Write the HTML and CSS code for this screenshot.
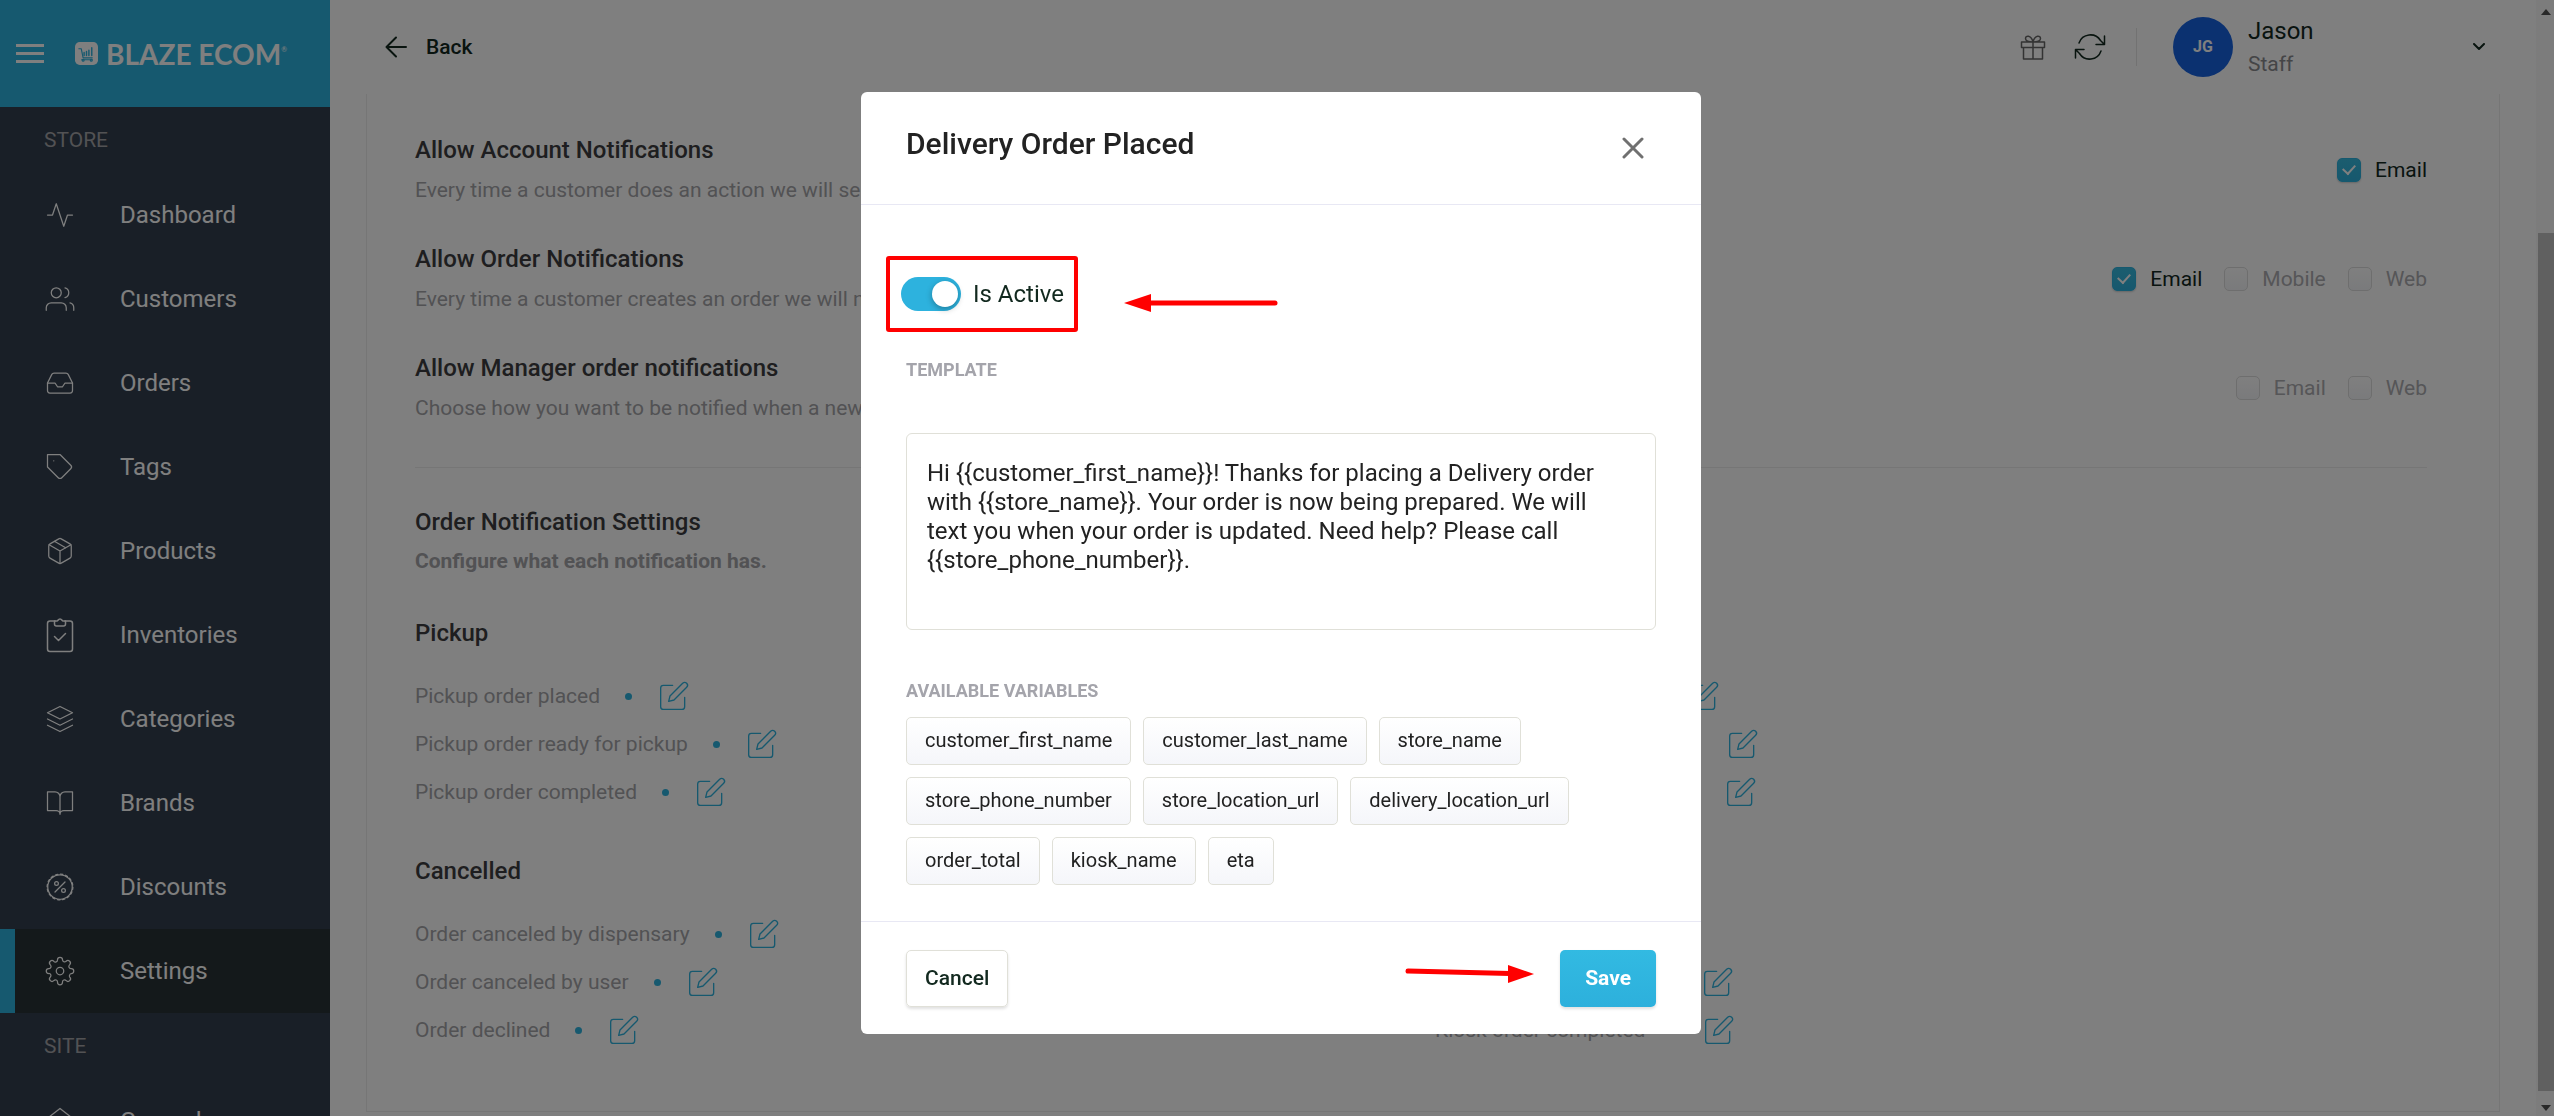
FILE: index.html
```
<!DOCTYPE html>
<html lang="en">
<head>
  <meta charset="UTF-8" />
  <meta name="viewport" content="width=device-width, initial-scale=1" />
  <title>Blaze Ecom - Notifications</title>
  <link rel="stylesheet" href="styles.css">
</head>
<body>
  <svg class="sprite" aria-hidden="true">
    <symbol id="i-edit" viewBox="0 0 24 24">
      <path d="M11 4H4a2 2 0 0 0-2 2v14a2 2 0 0 0 2 2h14a2 2 0 0 0 2-2v-7" />
      <path d="M18.5 2.5a2.12 2.12 0 0 1 3 3L12 15l-4 1 1-4z" />
    </symbol>
  </svg>

  <div class="app">
    <aside class="sidebar">
      <div class="sidebar-header">
        <button class="menu-btn" type="button" aria-label="Toggle menu"><span></span><span></span><span></span></button>
        <div class="logo">
          <svg class="logo-icon" viewBox="0 0 24 24">
            <rect width="24" height="24" rx="5" fill="#fff" />
            <g fill="none" stroke="#2db2de" stroke-width="1.2">
              <path d="M4 7h2.500l2 9.500h9.500" />
              <path d="M9.500 14V11M12 14V10M14.500 14V8.500M17.500 14V6" stroke-width="1.500" />
              <path d="M7 18.500h11" />
              <circle cx="8.500" cy="19" r="1" />
              <circle cx="17" cy="19" r="1" />
            </g>
          </svg>
          <span class="logo-text">BLAZE ECOM<sup>®</sup></span>
        </div>
      </div>
      <nav class="sidebar-nav">
        <div class="nav-title">STORE</div>
        <a class="nav-item" href="#"><svg class="icon" viewBox="0 0 24 24"><path d="M22 12h-4l-3 9L9 3l-3 9H2" /></svg>Dashboard</a>
        <a class="nav-item" href="#"><svg class="icon" viewBox="0 0 24 24"><path d="M17 21v-2a4 4 0 0 0-4-4H5a4 4 0 0 0-4 4v2" /><circle cx="9" cy="7" r="4" /><path d="M23 21v-2a4 4 0 0 0-3-3.870M16 3.130a4 4 0 0 1 0 7.750" /></svg>Customers</a>
        <a class="nav-item" href="#"><svg class="icon" viewBox="0 0 24 24"><path d="M22 12h-6l-2 3h-4l-2-3H2" /><path d="M5.450 5.110L2 12v6a2 2 0 0 0 2 2h16a2 2 0 0 0 2-2v-6l-3.450-6.890A2 2 0 0 0 16.760 4H7.240a2 2 0 0 0-1.790 1.110z" /></svg>Orders</a>
        <a class="nav-item" href="#"><svg class="icon" viewBox="0 0 24 24"><path d="M20.590 13.410l-7.170 7.170a2 2 0 0 1-2.830 0L2 12V2h10l8.590 8.590a2 2 0 0 1 0 2.820z" /><path d="M7 7h.01" /></svg>Tags</a>
        <a class="nav-item" href="#"><svg class="icon" viewBox="0 0 24 24"><path d="M16.500 9.400l-9-5.190M21 16V8a2 2 0 0 0-1-1.730l-7-4a2 2 0 0 0-2 0l-7 4A2 2 0 0 0 3 8v8a2 2 0 0 0 1 1.730l7 4a2 2 0 0 0 2 0l7-4A2 2 0 0 0 21 16z" /><path d="M3.270 6.960L12 12.010l8.730-5.050M12 22.080V12" /></svg>Products</a>
        <a class="nav-item" href="#"><svg class="icon icon-tall" viewBox="0 0 30 36"><path d="M10 4H5a2.500 2.500 0 0 0-2.500 2.500V32A2.500 2.500 0 0 0 5 34.500h20a2.500 2.500 0 0 0 2.500-2.500V6.500A2.500 2.500 0 0 0 25 4h-5" /><path d="M9.500 4h2.500c1 0 1-2 3-2s2 2 3 2h2.500v3a2 2 0 0 1-2 2h-7a2 2 0 0 1-2-2zM9.500 19.500l4 4 7-7" /></svg>Inventories</a>
        <a class="nav-item" href="#"><svg class="icon" viewBox="0 0 24 24"><path d="M12 2L2 7l10 5 10-5-10-5zM2 17l10 5 10-5M2 12l10 5 10-5" /></svg>Categories</a>
        <a class="nav-item" href="#"><svg class="icon" viewBox="0 0 24 24"><path d="M2 3h6a4 4 0 0 1 4 4v14a3 3 0 0 0-3-3H2zM22 3h-6a4 4 0 0 0-4 4v14a3 3 0 0 1 3-3h7z" /></svg>Brands</a>
        <a class="nav-item" href="#"><svg class="icon" viewBox="0 0 24 24"><circle cx="12" cy="12" r="9.800" /><circle cx="12" cy="12" r="10.300" stroke-dasharray="2 2.045" /><circle cx="9.200" cy="9.200" r="1.500" /><circle cx="14.800" cy="14.800" r="1.500" /><path d="M16 8l-8 8" /></svg>Discounts</a>
        <a class="nav-item active" href="#"><svg class="icon" viewBox="0 0 24 24"><circle cx="12" cy="12" r="3" /><path d="M19.730 15.180a1.650 1.650 0 0 0 0 1.640l.06.06a2 2 0 0 1-2.830 2.830l-.06-.06a1.650 1.650 0 0 0-2.900 1.180V21a2 2 0 0 1-4 0v-.17a1.650 1.650 0 0 0-2.900-1.180l-.06.06a2 2 0 0 1-2.830-2.830l.06-.06A1.650 1.650 0 0 0 3.090 14H3a2 2 0 0 1 0-4h.09a1.650 1.650 0 0 0 1.180-2.900l-.06-.06a2 2 0 0 1 2.830-2.830l.06.06A1.650 1.650 0 0 0 10 3.090V3a2 2 0 0 1 4 0v.09a1.650 1.650 0 0 0 2.820 1.180l.06-.06a2 2 0 0 1 2.830 2.830l-.06.06A1.650 1.650 0 0 0 20.910 10H21a2 2 0 0 1 0 4h-.09a1.650 1.650 0 0 0-1.180 1.180z" /></svg>Settings</a>
        <div class="nav-title">SITE</div>
        <a class="nav-item" href="#"><svg class="icon" viewBox="0 0 24 24"><path d="M3 9l9-7 9 7v11a2 2 0 0 1-2 2H5a2 2 0 0 1-2-2z" /></svg>General</a>
      </nav>
    </aside>

    <main class="content">
      <header class="topbar">
        <button class="back-btn" type="button">
          <svg class="back-icon" viewBox="0 0 22 22"><path d="M21 11H1.500M11 1.500L1.500 11l9.500 9.500" /></svg>
          Back
        </button>
        <div class="topbar-right">
          <button class="icon-btn" type="button" aria-label="Rewards">
            <svg class="gift-icon" viewBox="0 0 26 26"><path d="M1.500 8h23v5.500h-23zM3.500 13.500h19V25h-19zM13 8v17M13 8C9 8 5.500 7.500 5.500 4.500S11 .5 13 8zM13 8c4 0 7.500-.5 7.500-3.500S15 .5 13 8z" /></svg>
          </button>
          <button class="icon-btn" type="button" aria-label="Refresh">
            <svg class="refresh-icon" viewBox="0 0 32 28"><path d="M30.500 3v8.500H22M1.500 25v-8.500H10M5 10a12 12 0 0 1 21.500-2.500l4 4M1.500 16.500l4 4A12 12 0 0 0 27 18" /></svg>
          </button>
          <div class="user">
            <div class="avatar">JG</div>
            <div class="user-info">
              <div class="user-name">Jason</div>
              <div class="user-role">Staff</div>
            </div>
            <svg class="chevron" viewBox="0 0 12 8"><path d="M1 1l5 5 5-5" /></svg>
          </div>
        </div>
      </header>

      <section class="card">
        <div class="option">
          <div>
            <h3>Allow Account Notifications</h3>
            <p>Every time a customer does an action we will send an email.</p>
          </div>
          <div class="checks">
            <label class="check"><input type="checkbox" checked />Email</label>
          </div>
        </div>
        <div class="option">
          <div>
            <h3>Allow Order Notifications</h3>
            <p>Every time a customer creates an order we will notify them.</p>
          </div>
          <div class="checks">
            <label class="check"><input type="checkbox" checked />Email</label>
            <label class="check"><input type="checkbox" disabled />Mobile</label>
            <label class="check"><input type="checkbox" disabled />Web</label>
          </div>
        </div>
        <div class="option">
          <div>
            <h3>Allow Manager order notifications</h3>
            <p>Choose how you want to be notified when a new order is placed.</p>
          </div>
          <div class="checks">
            <label class="check"><input type="checkbox" disabled />Email</label>
            <label class="check"><input type="checkbox" disabled />Web</label>
          </div>
        </div>

        <div class="order-settings">
          <h3>Order Notification Settings</h3>
          <p class="strong">Configure what each notification has.</p>
          <div class="groups">
            <div class="group">
              <h3>Pickup</h3>
              <ul>
                <li>Pickup order placed<i class="dot"></i><button class="edit-btn" type="button" aria-label="Edit"><svg><use href="#i-edit" /></svg></button></li>
                <li>Pickup order ready for pickup<i class="dot"></i><button class="edit-btn" type="button" aria-label="Edit"><svg><use href="#i-edit" /></svg></button></li>
                <li>Pickup order completed<i class="dot"></i><button class="edit-btn" type="button" aria-label="Edit"><svg><use href="#i-edit" /></svg></button></li>
              </ul>
            </div>
            <div class="group">
              <h3>Delivery</h3>
              <ul>
                <li>Delivery order placed<i class="dot"></i><button class="edit-btn" type="button" aria-label="Edit"><svg><use href="#i-edit" /></svg></button></li>
                <li>Delivery order on the way<i class="dot"></i><button class="edit-btn" type="button" aria-label="Edit"><svg><use href="#i-edit" /></svg></button></li>
                <li>Delivery order completed<i class="dot"></i><button class="edit-btn" type="button" aria-label="Edit"><svg><use href="#i-edit" /></svg></button></li>
              </ul>
            </div>
            <div class="group">
              <h3>Cancelled</h3>
              <ul>
                <li>Order canceled by dispensary<i class="dot"></i><button class="edit-btn" type="button" aria-label="Edit"><svg><use href="#i-edit" /></svg></button></li>
                <li>Order canceled by user<i class="dot"></i><button class="edit-btn" type="button" aria-label="Edit"><svg><use href="#i-edit" /></svg></button></li>
                <li>Order declined<i class="dot"></i><button class="edit-btn" type="button" aria-label="Edit"><svg><use href="#i-edit" /></svg></button></li>
              </ul>
            </div>
            <div class="group">
              <h3>Kiosk</h3>
              <ul>
                <li>Kiosk order placed<i class="dot"></i><button class="edit-btn" type="button" aria-label="Edit"><svg><use href="#i-edit" /></svg></button></li>
                <li>Kiosk order processed<i class="dot"></i><button class="edit-btn" type="button" aria-label="Edit"><svg><use href="#i-edit" /></svg></button></li>
                <li>Kiosk order completed<i class="dot"></i><button class="edit-btn" type="button" aria-label="Edit"><svg><use href="#i-edit" /></svg></button></li>
              </ul>
            </div>
          </div>
        </div>
      </section>
    </main>

    <div class="scrollbar">
      <span class="scroll-up"></span>
      <span class="scroll-thumb"></span>
      <span class="scroll-down"></span>
    </div>
  </div>

  <div class="overlay">
    <form class="modal" role="dialog" aria-labelledby="modalTitle">
      <div class="modal-header">
        <h2 id="modalTitle">Delivery Order Placed</h2>
        <button class="close-btn" type="button" aria-label="Close"><svg viewBox="0 0 22 22"><path d="M2 2l18 18M20 2L2 20" /></svg></button>
      </div>
      <div class="modal-body">
        <div class="active-row">
          <label class="switch"><input type="checkbox" checked />Is Active</label>
          <svg class="arrow" width="156" height="20" viewBox="0 0 156 20"><path class="arrow-line" d="M26 10H152" /><path d="M1 10L28 1v18z" /></svg>
        </div>
        <label class="field-label" for="template">TEMPLATE</label>
        <textarea id="template">Hi {{customer_first_name}}! Thanks for placing a Delivery order with {{store_name}}. Your order is now being prepared. We will text you when your order is updated. Need help? Please call {{store_phone_number}}.</textarea>
        <div class="field-label">AVAILABLE VARIABLES</div>
        <div class="tags">
          <button class="tag" type="button">customer_first_name</button>
          <button class="tag" type="button">customer_last_name</button>
          <button class="tag" type="button">store_name</button>
          <button class="tag" type="button">store_phone_number</button>
          <button class="tag" type="button">store_location_url</button>
          <button class="tag" type="button">delivery_location_url</button>
          <button class="tag" type="button">order_total</button>
          <button class="tag" type="button">kiosk_name</button>
          <button class="tag" type="button">eta</button>
        </div>
      </div>
      <div class="modal-footer">
        <button class="cancel-btn" type="button">Cancel</button>
        <svg class="arrow" width="130" height="20" viewBox="0 0 130 20"><path class="arrow-line" d="M3 7l102 2.500" /><path d="M103 1v18l26-9z" /></svg>
        <button class="save-btn" type="button">Save</button>
      </div>
    </form>
  </div>
</body>
</html>
```
FILE: styles.css
```
* {
  box-sizing: border-box;
}
body, html {
  height: 100%;
  margin: 0;
  padding: 0;
}
body {
  font-family: Roboto, "Liberation Sans", sans-serif;
  font-size: 21px;
  color: #12291f;
  overflow: hidden;
}
button {
  font-family: inherit;
  background: none;
  border: none;
  padding: 0;
  cursor: pointer;
}
h2, h3, p, ul {
  margin: 0;
  padding: 0;
}
svg {
  display: block;
  fill: none;
  stroke-linecap: round;
  stroke-linejoin: round;
}
.sprite {
  display: none;
}
.app {
  display: flex;
  height: 100vh;
  overflow: hidden;
  background: #fff;
}

/* Sidebar */
.sidebar {
  flex: 0 0 330px;
  background: #333f4e;
  overflow: hidden;
}
.sidebar-header {
  display: flex;
  align-items: center;
  gap: 31px;
  height: 107px;
  padding-left: 16px;
  background: #2db2de;
}
.menu-btn {
  display: flex;
  flex-direction: column;
  gap: 5px;
  width: 28px;
}
.menu-btn span {
  height: 3px;
  background: #fff;
}
.logo {
  display: flex;
  align-items: center;
  gap: 8px;
}
.logo-icon {
  width: 23px;
  height: 23px;
}
.logo-text {
  font-family: Lato, sans-serif;
  font-size: 28px;
  font-weight: 700;
  line-height: 32px;
  color: #fff;
}
.logo-text sup {
  font-size: 7px;
  font-weight: 400;
  vertical-align: 13px;
  line-height: 1;
}
.nav-title {
  height: 66px;
  padding-left: 44px;
  line-height: 66px;
  color: #a4a4a8;
}
.nav-item {
  display: flex;
  align-items: center;
  gap: 45px;
  height: 84px;
  padding-left: 45px;
  font-size: 24px;
  color: #fff;
  text-decoration: none;
}
.nav-item.active {
  padding-left: 30px;
  border-left: 15px solid #2db2de;
  background: #283236;
}
.icon {
  width: 30px;
  height: 30px;
  stroke: #fff;
  stroke-width: 1;
}
.icon-tall {
  height: 36px;
  stroke-width: 1.500;
}

/* Top bar */
.content {
  flex: 1;
  min-width: 0;
}
.topbar {
  display: flex;
  justify-content: space-between;
  align-items: center;
  height: 94px;
  padding: 0 51px 0 55px;
}
.back-btn {
  display: flex;
  align-items: center;
  gap: 19px;
  font-size: 21px;
  font-weight: 500;
  color: #12291f;
}
.back-icon {
  width: 22px;
  height: 22px;
  stroke: #12291f;
  stroke-width: 2;
}
.topbar-right {
  display: flex;
  align-items: center;
  gap: 28px;
}
.gift-icon {
  width: 26px;
  height: 26px;
  stroke: #666;
  stroke-width: 1.500;
}
.refresh-icon {
  width: 32px;
  height: 28px;
  stroke: #12291f;
  stroke-width: 1.500;
}
.user {
  display: flex;
  align-items: center;
  width: 349px;
  padding-left: 37px;
  margin-left: 2px;
  background: linear-gradient(#e4e4e4, #e4e4e4) left center / 1px 38px no-repeat;
}
.avatar {
  width: 60px;
  height: 60px;
  border-radius: 50%;
  background: #1662e0;
  color: #fff;
  font-size: 16px;
  font-weight: 700;
  line-height: 60px;
  text-align: center;
}
.user-info {
  flex: 1;
  padding-left: 15px;
}
.user-name {
  font-size: 24px;
  line-height: 34px;
}
.user-role {
  line-height: 32px;
  color: #8a8a8e;
}
.chevron {
  width: 12px;
  height: 8px;
  stroke: #12291f;
  stroke-width: 2;
}

/* Settings card */
.card {
  margin: 0 36px;
  padding: 41px 72px 58px 48px;
  border: 1px solid #ececec;
  border-top: none;
}
h3 {
  font-size: 24px;
  font-weight: 500;
  line-height: 30px;
  color: #3c3c40;
}
.card p, .group li {
  line-height: 28px;
  color: #a4a4a8;
}
.option {
  display: flex;
  justify-content: space-between;
  align-items: center;
  margin-bottom: 40px;
}
.option p {
  margin-top: 11px;
}
.checks {
  display: flex;
  gap: 22px;
}
.check {
  display: flex;
  align-items: center;
  gap: 14px;
  line-height: 24px;
}
.check:has(input:disabled) {
  color: #acacb0;
}
.check input {
  appearance: none;
  display: flex;
  align-items: center;
  justify-content: center;
  width: 24px;
  height: 24px;
  margin: 0;
  border: 1px solid #dcdcdc;
  border-radius: 5px;
  background: linear-gradient(#fff, #f4f5f8);
}
.check input:checked {
  border-color: #2db2de;
  background: linear-gradient(#37bade, #2db0dc);
  box-shadow: 0 1px 2px rgba(0, 0, 0, 0.2);
}
.check input:checked::after {
  content: "";
  width: 6px;
  height: 10px;
  margin-bottom: 3px;
  border: solid #fff;
  border-width: 0 2px 2px 0;
  transform: rotate(42deg);
}
.order-settings {
  padding-top: 39px;
  margin-top: 45px;
  border-top: 1px solid #ececec;
}
.order-settings .strong {
  margin-top: 10px;
  font-weight: 700;
}
.groups {
  display: grid;
  grid-template-columns: 1fr 1fr;
  gap: 41px 28px;
  margin-top: 43px;
}
.group ul {
  margin-top: 24px;
  margin-bottom: -1px;
  list-style: none;
}
.group li {
  display: flex;
  align-items: center;
  height: 48px;
}
.dot {
  width: 7px;
  height: 7px;
  margin: 0 26px 0 25px;
  border-radius: 50%;
  background: #2db2de;
}
.edit-btn svg {
  width: 32px;
  height: 32px;
  stroke: #2db2de;
  stroke-width: 1;
}

/* Scroll track */
.scrollbar {
  display: flex;
  flex-direction: column;
  align-items: center;
  flex: 0 0 18px;
  padding: 9px 0 5px 2px;
  background: #f8f8f8;
}
.scroll-up, .scroll-down {
  border: 5px solid transparent;
  border-top: none;
  border-bottom: 6px solid #505050;
}
.scroll-down {
  border-top: 6px solid #505050;
  border-bottom: none;
}
.scroll-thumb {
  flex: 1;
  width: 100%;
  margin: 218px 0 14px;
  background: #c1c1c1;
}

/* Modal */
.overlay {
  position: fixed;
  inset: 0;
  display: flex;
  align-items: center;
  justify-content: center;
  padding: 10px 0 0 8px;
  background: rgba(0, 0, 0, 0.5);
}
.modal {
  width: 840px;
  border-radius: 6px;
  background: #fff;
}
.modal-header {
  display: flex;
  justify-content: space-between;
  align-items: center;
  padding: 32px 57px 40px 45px;
  border-bottom: 1px solid #e8e8f4;
}
.modal-header h2 {
  font-size: 30px;
  font-weight: 500;
  line-height: 40px;
  color: #222;
}
.close-btn {
  margin-top: 8px;
}
.close-btn svg {
  width: 22px;
  height: 22px;
  stroke: #707070;
  stroke-width: 3;
}
.modal-body {
  padding: 51px 45px 36px;
}
.active-row {
  display: flex;
  align-items: center;
  gap: 45px;
  margin-left: -20px;
}
.arrow {
  fill: #f00;
}
.arrow-line {
  stroke: #f00;
  stroke-width: 5;
}
.active-row .arrow {
  margin-top: 18px;
}
.switch {
  display: flex;
  align-items: center;
  gap: 12px;
  height: 76px;
  padding: 0 10px 0 11px;
  border: 4px solid #f00;
  border-radius: 3px;
  font-size: 24px;
}
.switch input {
  appearance: none;
  display: flex;
  align-items: center;
  justify-content: flex-end;
  width: 60px;
  height: 34px;
  margin: 0;
  padding: 0 3px;
  border-radius: 17px;
  background: #2db2de;
}
.switch input::after {
  content: "";
  width: 26px;
  height: 26px;
  border-radius: 50%;
  background: #fff;
  box-shadow: 0 2px 6px rgba(0, 0, 0, 0.3);
}
.field-label {
  display: block;
  font-size: 18px;
  font-weight: 700;
  line-height: 24px;
  color: #a4a4ab;
}
.modal-body label.field-label {
  margin-top: 26px;
}
#template {
  display: block;
  width: 100%;
  height: 197px;
  margin: 51px 0 49px;
  padding: 25px 40px 25px 20px;
  border: 1px solid #e0e0d8;
  border-radius: 6px;
  outline: none;
  resize: none;
  font-family: inherit;
  font-size: 24px;
  line-height: 29px;
  color: #222;
}
.tags {
  display: flex;
  flex-wrap: wrap;
  gap: 12px;
  margin-top: 14px;
}
.tag {
  height: 48px;
  padding: 0 18px 2px;
  border: 1px solid #e0e0d8;
  border-radius: 5px;
  background: linear-gradient(#fff, #f5f6fa);
  font-size: 20px;
  color: #222;
}
.modal-footer {
  display: flex;
  align-items: center;
  padding: 28px 45px 27px;
  border-top: 1px solid #e8e8f4;
}
.modal-footer .arrow {
  margin: 0 25px 9px auto;
}
.cancel-btn, .save-btn {
  height: 57px;
  border-radius: 5px;
  font-size: 21px;
  font-weight: 500;
  box-shadow: 0 2px 3px rgba(0, 0, 0, 0.12);
}
.cancel-btn {
  padding: 0 18px 2px;
  border: 1px solid #e0e0d8;
  color: #12291f;
}
.save-btn {
  padding: 0 25px 2px;
  background: linear-gradient(#32bae2, #2db0dc);
  font-weight: 700;
  color: #fff;
}
```
